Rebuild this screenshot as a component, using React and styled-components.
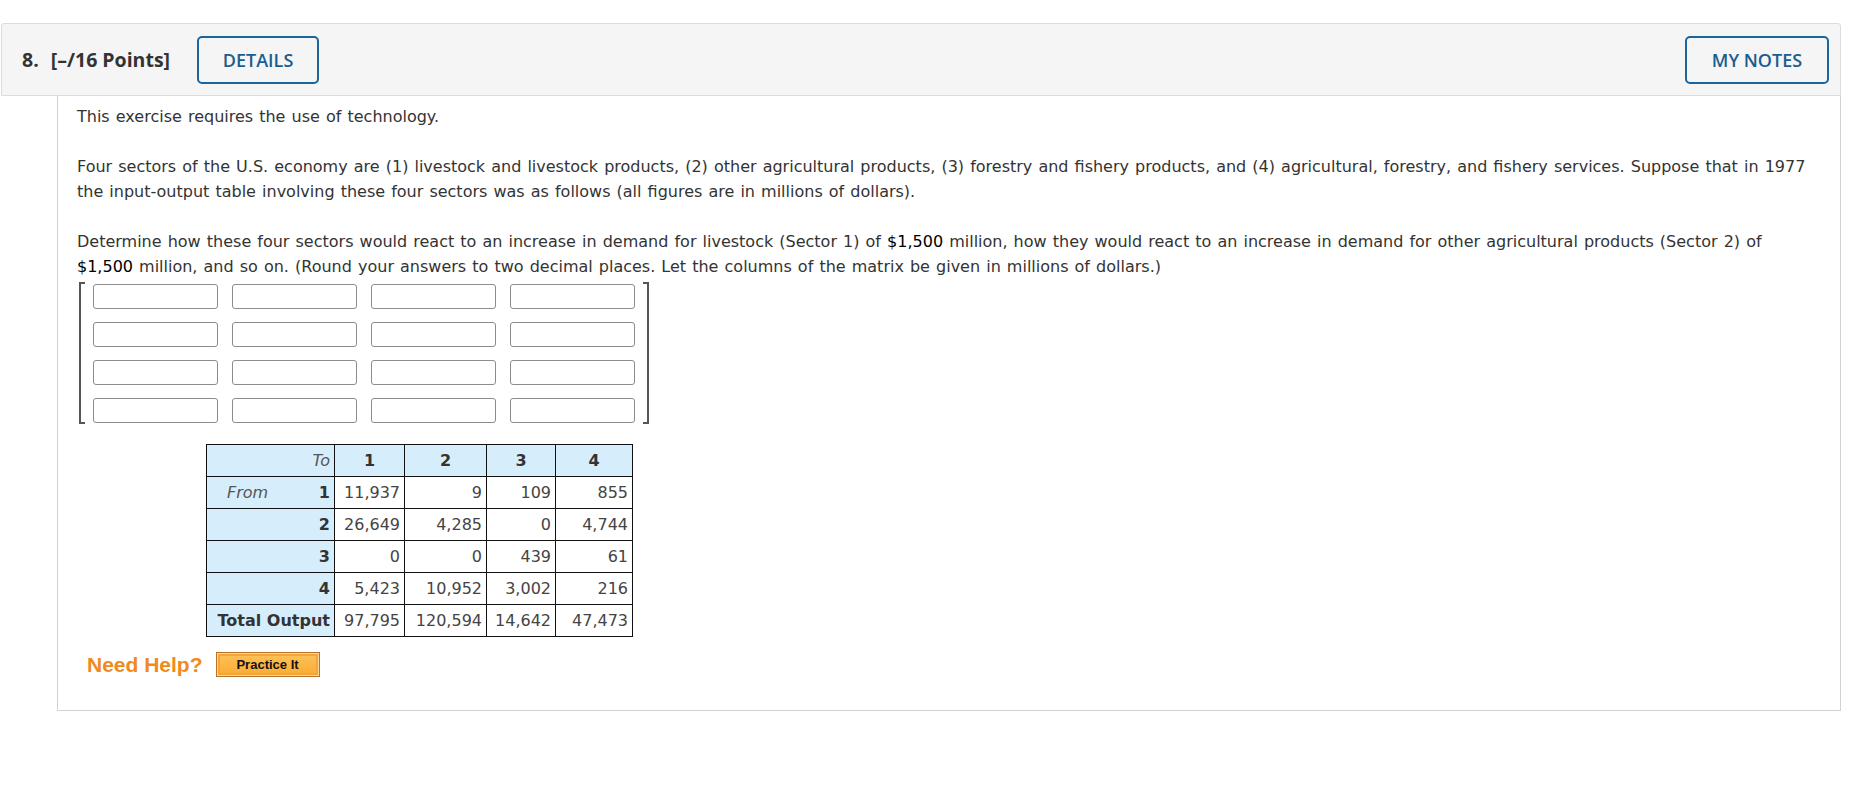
import React from "react";
import styled, { createGlobalStyle } from "styled-components";

const GlobalStyle = createGlobalStyle`
  body {
    margin: 0;
    background: #fff;
    font-family: "DejaVu Sans", Verdana, sans-serif;
  }
`;

const Page = styled.div`
  padding: 23px 22px 40px 1px;
`;

const Header = styled.div`
  height: 71px;
  display: flex;
  align-items: center;
  background: #f5f5f5;
  border: 1px solid #dcdcdc;
  border-radius: 3px 3px 0 0;
  padding: 0 11px 0 20px;
`;

const QNum = styled.span`
  font-family: "Open Sans", sans-serif;
  font-weight: 700;
  font-size: 19.5px;
  color: #333;
  margin-right: 12px;
`;

const Points = styled.span`
  font-family: "Open Sans", sans-serif;
  font-weight: 700;
  font-size: 19.5px;
  color: #333;
`;

const HeadButton = styled.button`
  height: 48px;
  width: ${(p) => p.$w}px;
  margin-left: ${(p) => (p.$right ? "auto" : "27px")};
  background: transparent;
  border: 2px solid #1c659c;
  border-radius: 5px;
  color: #1a5d8f;
  font-family: "Open Sans", sans-serif;
  font-weight: 600;
  font-size: 18px;
  cursor: pointer;
`;

const Body = styled.div`
  margin-left: 56px;
  border: 1px solid #d2d2d2;
  border-top: none;
  padding: 8px 20px 33px 19px;
  color: #333;
  font-size: 16px;
  word-spacing: 1px;
  line-height: 25px;
`;

const Para = styled.p`
  margin: 0 0 25px 0;
  &:last-of-type {
    margin-bottom: 0;
  }
`;

const Val = styled.span`
  color: #000;
`;

const MatrixWrap = styled.div`
  display: inline-flex;
  align-items: stretch;
  margin: 3px 0 0 2px;
`;

const Bracket = styled.div`
  width: 4px;
  border: 2px solid #555;
  ${(p) => (p.$side === "left" ? "border-right: none;" : "border-left: none;")}
`;

const MatrixGrid = styled.div`
  display: grid;
  grid-template-columns: repeat(4, 125px);
  grid-auto-rows: 25px;
  column-gap: 14px;
  row-gap: 13px;
  margin: 2px 8px 1px 8px;
`;

const Cell = styled.input`
  box-sizing: border-box;
  width: 100%;
  height: 100%;
  border: 1px solid #8c8c8c;
  border-radius: 3px;
  background: #fff;
  padding: 0 4px;
`;

const Table = styled.table`
  border-collapse: collapse;
  margin: 13px 0 0 129px;
  font-size: 16px;
  word-spacing: 0;
  color: #444;
`;

const Th = styled.td`
  background: #d6eefb;
  border: 1px solid #111;
  height: 31px;
  padding: 0 4px;
  text-align: ${(p) => p.$align || "right"};
  font-weight: 700;
  width: ${(p) => (p.$w ? p.$w + "px" : "auto")};
  color: #333;
`;

const HeadCell = styled.td`
  background: #d6eefb;
  border: 1px solid #111;
  height: 31px;
  padding: 0 4px;
  width: 119px;
  color: #333;
`;

const HeadInner = styled.div`
  display: flex;
  justify-content: space-between;
  align-items: center;
  padding-left: ${(p) => (p.$indent ? "16px" : "0")};
`;

const Ital = styled.span`
  font-style: italic;
  color: #555;
  font-weight: 400;
  margin-left: ${(p) => (p.$end ? "auto" : "0")};
`;

const Bold = styled.span`
  font-weight: 700;
  margin-left: auto;
`;

const Td = styled.td`
  border: 1px solid #111;
  height: 31px;
  padding: 0 4px;
  text-align: right;
  background: #fff;
`;

const HelpRow = styled.div`
  display: flex;
  align-items: center;
  margin: 15px 0 0 10px;
`;

const NeedHelp = styled.span`
  font-family: "Liberation Sans", Arial, sans-serif;
  font-weight: 700;
  font-size: 21px;
  word-spacing: 0;
  color: #f08a1c;
  margin-right: 13px;
`;

const Practice = styled.button`
  width: 104px;
  height: 25px;
  padding: 0;
  border: 1px solid #b8732a;
  background: linear-gradient(#fec25a, #fbab33);
  box-shadow: inset 0 0 0 1px #fdd79a, inset 0 0 0 3px #f6a53a;
  font-family: "Liberation Sans", Arial, sans-serif;
  font-weight: 700;
  font-size: 13px;
  color: #111;
  cursor: pointer;
`;

const rows = [
  ["1", "11,937", "9", "109", "855"],
  ["2", "26,649", "4,285", "0", "4,744"],
  ["3", "0", "0", "439", "61"],
  ["4", "5,423", "10,952", "3,002", "216"],
];

const totals = ["97,795", "120,594", "14,642", "47,473"];
const colWidths = [61, 73, 60, 68];

export default function App() {
  return (
    <Page>
      <GlobalStyle />
      <Header>
        <QNum>8.</QNum>
        <Points>[–/16 Points]</Points>
        <HeadButton $w={122}>DETAILS</HeadButton>
        <HeadButton $w={144} $right>
          MY NOTES
        </HeadButton>
      </Header>
      <Body>
        <Para>This exercise requires the use of technology.</Para>
        <Para>
          Four sectors of the U.S. economy are (1) livestock and livestock products, (2) other
          agricultural products, (3) forestry and fishery products, and (4) agricultural, forestry,
          and fishery services. Suppose that in 1977
          <br />
          the input-output table involving these four sectors was as follows (all figures are in
          millions of dollars).
        </Para>
        <Para>
          Determine how these four sectors would react to an increase in demand for livestock
          (Sector 1) of <Val>$1,500</Val> million, how they would react to an increase in demand for
          other agricultural products (Sector 2) of
          <br />
          <Val>$1,500</Val> million, and so on. (Round your answers to two decimal places. Let the
          columns of the matrix be given in millions of dollars.)
        </Para>
        <MatrixWrap>
          <Bracket $side="left" />
          <MatrixGrid>
            {Array.from({ length: 16 }).map((_, i) => (
              <Cell key={i} type="text" />
            ))}
          </MatrixGrid>
          <Bracket $side="right" />
        </MatrixWrap>
        <Table>
          <tbody>
            <tr>
              <HeadCell>
                <HeadInner>
                  <Ital $end>To</Ital>
                </HeadInner>
              </HeadCell>
              {["1", "2", "3", "4"].map((h, i) => (
                <Th key={h} $align="center" $w={colWidths[i]}>
                  {h}
                </Th>
              ))}
            </tr>
            {rows.map((r, ri) => (
              <tr key={r[0]}>
                <HeadCell>
                  <HeadInner $indent={ri === 0}>
                    {ri === 0 && <Ital>From</Ital>}
                    <Bold>{r[0]}</Bold>
                  </HeadInner>
                </HeadCell>
                {r.slice(1).map((v, i) => (
                  <Td key={i}>{v}</Td>
                ))}
              </tr>
            ))}
            <tr>
              <Th>Total Output</Th>
              {totals.map((v, i) => (
                <Td key={i}>{v}</Td>
              ))}
            </tr>
          </tbody>
        </Table>
        <HelpRow>
          <NeedHelp>Need Help?</NeedHelp>
          <Practice>Practice It</Practice>
        </HelpRow>
      </Body>
    </Page>
  );
}
